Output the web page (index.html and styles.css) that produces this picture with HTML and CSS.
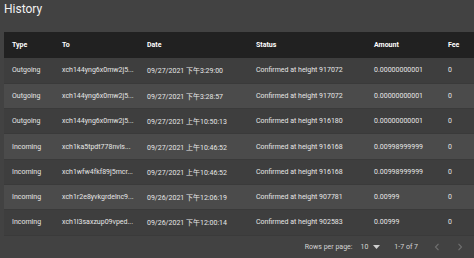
FILE: index.html
```html
<!DOCTYPE html>
<html>
<head>
<meta charset="utf-8">
<link rel="stylesheet" href="styles.css">
</head>
<body>
<div class="page">
  <h1 class="title">History</h1>
  <table class="history">
    <colgroup>
      <col class="c-type"><col class="c-to"><col class="c-date"><col class="c-status"><col class="c-amount"><col class="c-fee">
    </colgroup>
    <thead>
      <tr><th>Type</th><th>To</th><th>Date</th><th>Status</th><th>Amount</th><th>Fee</th></tr>
    </thead>
    <tbody>
      <tr><td>Outgoing</td><td>xch144yng6x0mw2j5...</td><td>09/27/2021 下午3:29:00</td><td>Confirmed at height 917072</td><td>0.00000000001</td><td>0</td></tr>
      <tr><td>Outgoing</td><td>xch144yng6x0mw2j5...</td><td>09/27/2021 下午3:28:57</td><td>Confirmed at height 917072</td><td>0.00000000001</td><td>0</td></tr>
      <tr><td>Outgoing</td><td>xch144yng6x0mw2j5...</td><td>09/27/2021 上午10:50:13</td><td>Confirmed at height 916180</td><td>0.00000000001</td><td>0</td></tr>
      <tr><td>Incoming</td><td>xch1ka5tpdt778nvls...</td><td>09/27/2021 上午10:46:52</td><td>Confirmed at height 916168</td><td>0.00998999999</td><td>0</td></tr>
      <tr><td>Incoming</td><td>xch1wfw4fkf89j5mcr...</td><td>09/27/2021 上午10:46:52</td><td>Confirmed at height 916168</td><td>0.00998999999</td><td>0</td></tr>
      <tr><td>Incoming</td><td>xch1r2e8yvkgrdelnc9...</td><td>09/26/2021 下午12:06:19</td><td>Confirmed at height 907781</td><td>0.00999</td><td>0</td></tr>
      <tr><td>Incoming</td><td>xch1l3saxzup09vped...</td><td>09/26/2021 下午12:00:14</td><td>Confirmed at height 902583</td><td>0.00999</td><td>0</td></tr>
    </tbody>
  </table>
  <div class="pager">
    <span class="pager-label">Rows per page:</span>
    <span class="pager-select">10 <svg class="caret" width="7" height="4" viewBox="0 0 7 4"><path d="M0 0h7L3.5 4z" fill="#d0d0d0"/></svg></span>
    <span class="pager-range">1-7 of 7</span>
    <span class="pager-btn"><svg width="6" height="8" viewBox="0 0 6 8"><path d="M4.5 0.8L1.5 4l3 3.2" fill="none" stroke="#6e6e6e" stroke-width="1.2"/></svg></span>
    <span class="pager-btn"><svg width="6" height="8" viewBox="0 0 6 8"><path d="M1.5 0.8L4.5 4l-3 3.2" fill="none" stroke="#6e6e6e" stroke-width="1.2"/></svg></span>
  </div>
</div>
</body>
</html>
```

FILE: styles.css
```css
html, body {
  margin: 0;
  padding: 0;
  background: #424242;
  overflow: hidden;
}
.page {
  padding-left: 4px;
  font-family: Roboto, "Noto Sans CJK SC", sans-serif;
  color: #e6e6e6;
}
.title {
  margin: 0 0 14px 0;
  font-size: 12px;
  line-height: 18px;
  font-weight: 400;
  color: #f2f2f2;
}
.history {
  width: 470px;
  table-layout: fixed;
  border-collapse: collapse;
  font-size: 7px;
}
.c-type { width: 50px; }
.c-to { width: 85px; }
.c-date { width: 109px; }
.c-status { width: 118px; }
.c-amount { width: 74px; }
.c-fee { width: 34px; }
.history th, .history td {
  padding: 0 8px;
  text-align: left;
  white-space: nowrap;
  overflow: hidden;
}
.history thead tr {
  background: #212121;
  height: 26px;
}
.history th {
  font-weight: 700;
  color: #ffffff;
}
.history tbody tr {
  height: 25.3px;
  background: #3e3e3e;
}
.history tbody tr:nth-child(even) {
  background: #4b4b4b;
}
.history td {
  border-bottom: 0.5px solid #3a3a3a;
}
.pager {
  display: flex;
  align-items: center;
  justify-content: flex-end;
  height: 23px;
  font-size: 7px;
  color: #d4d4d4;
  padding-right: 8px;
}
.pager-label {
  margin-right: 8px;
}
.pager-select {
  display: flex;
  align-items: center;
  gap: 5px;
  margin-right: 14px;
}
.pager-range {
  margin-right: 2px;
}
.pager-btn {
  display: flex;
  align-items: center;
  justify-content: center;
  width: 12px;
  margin-left: 11px;
}
```
